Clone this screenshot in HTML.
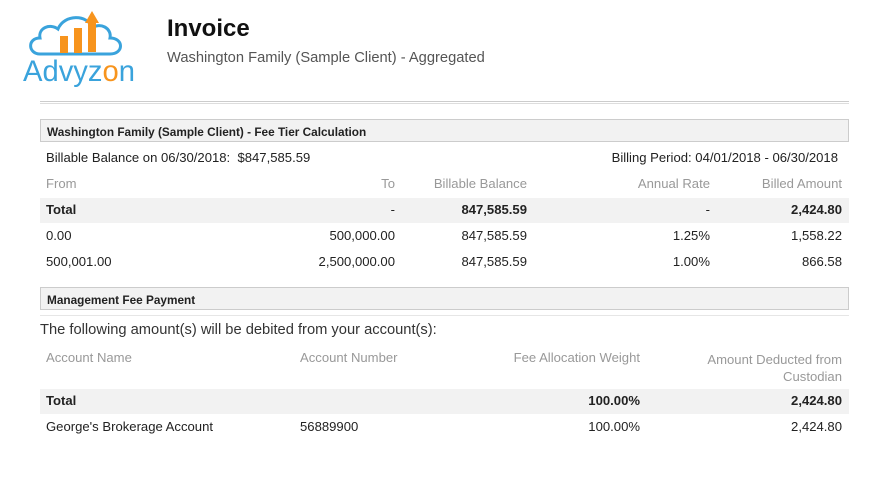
<!DOCTYPE html>
<html><head><meta charset="utf-8"><style>
body{margin:0;width:890px;height:486px;background:#fff;font-family:"Liberation Sans",Arial,sans-serif;color:#222;position:relative;overflow:hidden}
.a{position:absolute;white-space:nowrap;font-size:13.1px;line-height:14px}
.r{text-align:right}
.g{color:#999}
.b{font-weight:bold}
.box{position:absolute;left:40px;width:807px;height:21px;background:#f2f2f2;border:1px solid #ccc}
.box span{position:absolute;left:6px;top:5px;font-size:11.8px;font-weight:bold;color:#222}
.bg{position:absolute;left:40px;width:809px;background:#f2f2f2}
</style></head><body>
<svg style="position:absolute;left:20px;top:8px" width="125" height="80" viewBox="0 0 125 80">
<path d="M20 46 C8 46 7 30 20 30 C18 20 30 15 38 21 C44 6 68 6 72 20 C80 14 92 20 90 30 C104 30 104 46 90 46 Z" fill="none" stroke="#3aa3dc" stroke-width="3"/>
<rect x="40" y="28" width="8" height="17" fill="#f7941d"/>
<rect x="54" y="20" width="8" height="25" fill="#f7941d"/>
<rect x="68" y="14" width="8" height="30" fill="#f7941d"/>
<polygon points="65,15 72,3 79,15" fill="#f7941d"/>
<text x="3" y="73" font-family="Liberation Sans,sans-serif" font-size="30" fill="#3aa3dc" textLength="112" lengthAdjust="spacingAndGlyphs">Advyz<tspan fill="#f7941d">o</tspan>n</text>
</svg>
<div class="a b" style="left:167px;top:15px;font-size:24px;line-height:28px;color:#111">Invoice</div>
<div class="a" style="left:167px;top:50px;font-size:14.7px;line-height:17px;color:#555">Washington Family (Sample Client) - Aggregated</div>
<div style="position:absolute;left:40px;top:101px;width:809px;height:1px;background:#ccc"></div>
<div style="position:absolute;left:40px;top:103px;width:809px;height:1px;background:#ddd"></div>

<div class="box" style="top:119px"><span>Washington Family (Sample Client) - Fee Tier Calculation</span></div>
<div class="a" style="left:46px;top:151px">Billable Balance on 06/30/2018:&nbsp; $847,585.59</div>
<div class="a r" style="right:52px;top:151px">Billing Period: 04/01/2018 - 06/30/2018</div>

<div class="a g" style="left:46px;top:177px">From</div>
<div class="a g r" style="right:495px;top:177px">To</div>
<div class="a g r" style="right:363px;top:177px">Billable Balance</div>
<div class="a g r" style="right:180px;top:177px">Annual Rate</div>
<div class="a g r" style="right:48px;top:177px">Billed Amount</div>

<div class="bg" style="top:198px;height:25px"></div>
<div class="a b" style="left:46px;top:203px">Total</div>
<div class="a r" style="right:495px;top:203px">-</div>
<div class="a b r" style="right:363px;top:203px">847,585.59</div>
<div class="a r" style="right:180px;top:203px">-</div>
<div class="a b r" style="right:48px;top:203px">2,424.80</div>

<div class="a" style="left:46px;top:229px">0.00</div>
<div class="a r" style="right:495px;top:229px">500,000.00</div>
<div class="a r" style="right:363px;top:229px">847,585.59</div>
<div class="a r" style="right:180px;top:229px">1.25%</div>
<div class="a r" style="right:48px;top:229px">1,558.22</div>

<div class="a" style="left:46px;top:255px">500,001.00</div>
<div class="a r" style="right:495px;top:255px">2,500,000.00</div>
<div class="a r" style="right:363px;top:255px">847,585.59</div>
<div class="a r" style="right:180px;top:255px">1.00%</div>
<div class="a r" style="right:48px;top:255px">866.58</div>

<div class="box" style="top:287px"><span>Management Fee Payment</span></div>
<div style="position:absolute;left:40px;top:315px;width:809px;height:1px;background:#e6e6e6"></div>
<div class="a" style="left:40px;top:322px;font-size:14.7px;line-height:17px;color:#333">The following amount(s) will be debited from your account(s):</div>

<div class="a g" style="left:46px;top:351px">Account Name</div>
<div class="a g" style="left:300px;top:351px">Account Number</div>
<div class="a g r" style="right:250px;top:351px">Fee Allocation Weight</div>
<div class="a g r" style="right:48px;top:351px;line-height:17px">Amount Deducted from<br>Custodian</div>

<div class="bg" style="top:389px;height:25px"></div>
<div class="a b" style="left:46px;top:394px">Total</div>
<div class="a b r" style="right:250px;top:394px">100.00%</div>
<div class="a b r" style="right:48px;top:394px">2,424.80</div>

<div class="a" style="left:46px;top:420px">George's Brokerage Account</div>
<div class="a" style="left:300px;top:420px">56889900</div>
<div class="a r" style="right:250px;top:420px">100.00%</div>
<div class="a r" style="right:48px;top:420px">2,424.80</div>
</body></html>
